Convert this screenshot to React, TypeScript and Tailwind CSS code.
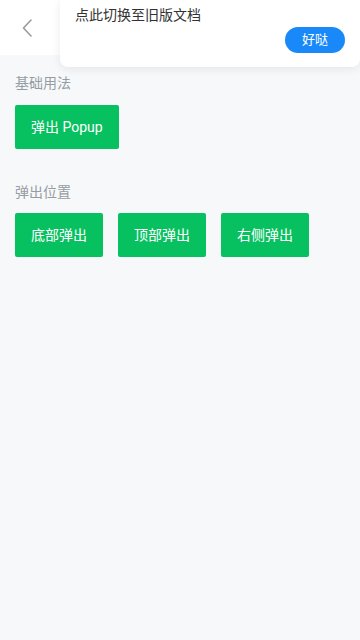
export default function App() {
  const font = { fontFamily: 'Roboto, "Noto Sans CJK SC", sans-serif' };
  return (
    <div className="relative min-h-[640px] w-[360px] bg-[#f7f8fa]" style={font}>
      {/* header */}
      <div className="flex h-[55px] items-center bg-white px-4">
        <svg width="16" height="20" viewBox="0 0 16 20" fill="none" className="ml-[3px]">
          <path d="M12 2 L4.5 10 L12 18" stroke="#9a9a9a" strokeWidth="1.6" strokeLinecap="round" strokeLinejoin="round" />
        </svg>
      </div>

      <div className="px-[15px]">
        <h2 className="pt-[18px] pb-[12px] text-[14px] leading-[20px] text-[#969da2]">基础用法</h2>
        <div className="flex">
          <button className="h-[44px] rounded-[2px] bg-[#07c160] px-[16px] text-[14px] text-white">弹出 Popup</button>
        </div>

        <h2 className="pt-[33px] pb-[11px] text-[14px] leading-[20px] text-[#969da2]">弹出位置</h2>
        <div className="flex gap-[15px]">
          <button className="h-[44px] w-[88px] rounded-[2px] bg-[#07c160] text-[14px] text-white">底部弹出</button>
          <button className="h-[44px] w-[88px] rounded-[2px] bg-[#07c160] text-[14px] text-white">顶部弹出</button>
          <button className="h-[44px] w-[88px] rounded-[2px] bg-[#07c160] text-[14px] text-white">右侧弹出</button>
        </div>
      </div>

      {/* switch-version notice */}
      <div className="absolute left-[60px] top-0 h-[67px] w-[300px] rounded-b-[8px] bg-white shadow-[0_2px_10px_rgba(0,0,0,0.08)]">
        <div className="px-[15px] pt-[5px] text-[14px] leading-[20px] text-[#323233]">点此切换至旧版文档</div>
        <div className="flex justify-end pr-[15px] pt-[2px]">
          <button className="h-[26px] w-[60px] rounded-full bg-[#1989fa] text-[13px] text-white">好哒</button>
        </div>
      </div>
    </div>
  );
}
